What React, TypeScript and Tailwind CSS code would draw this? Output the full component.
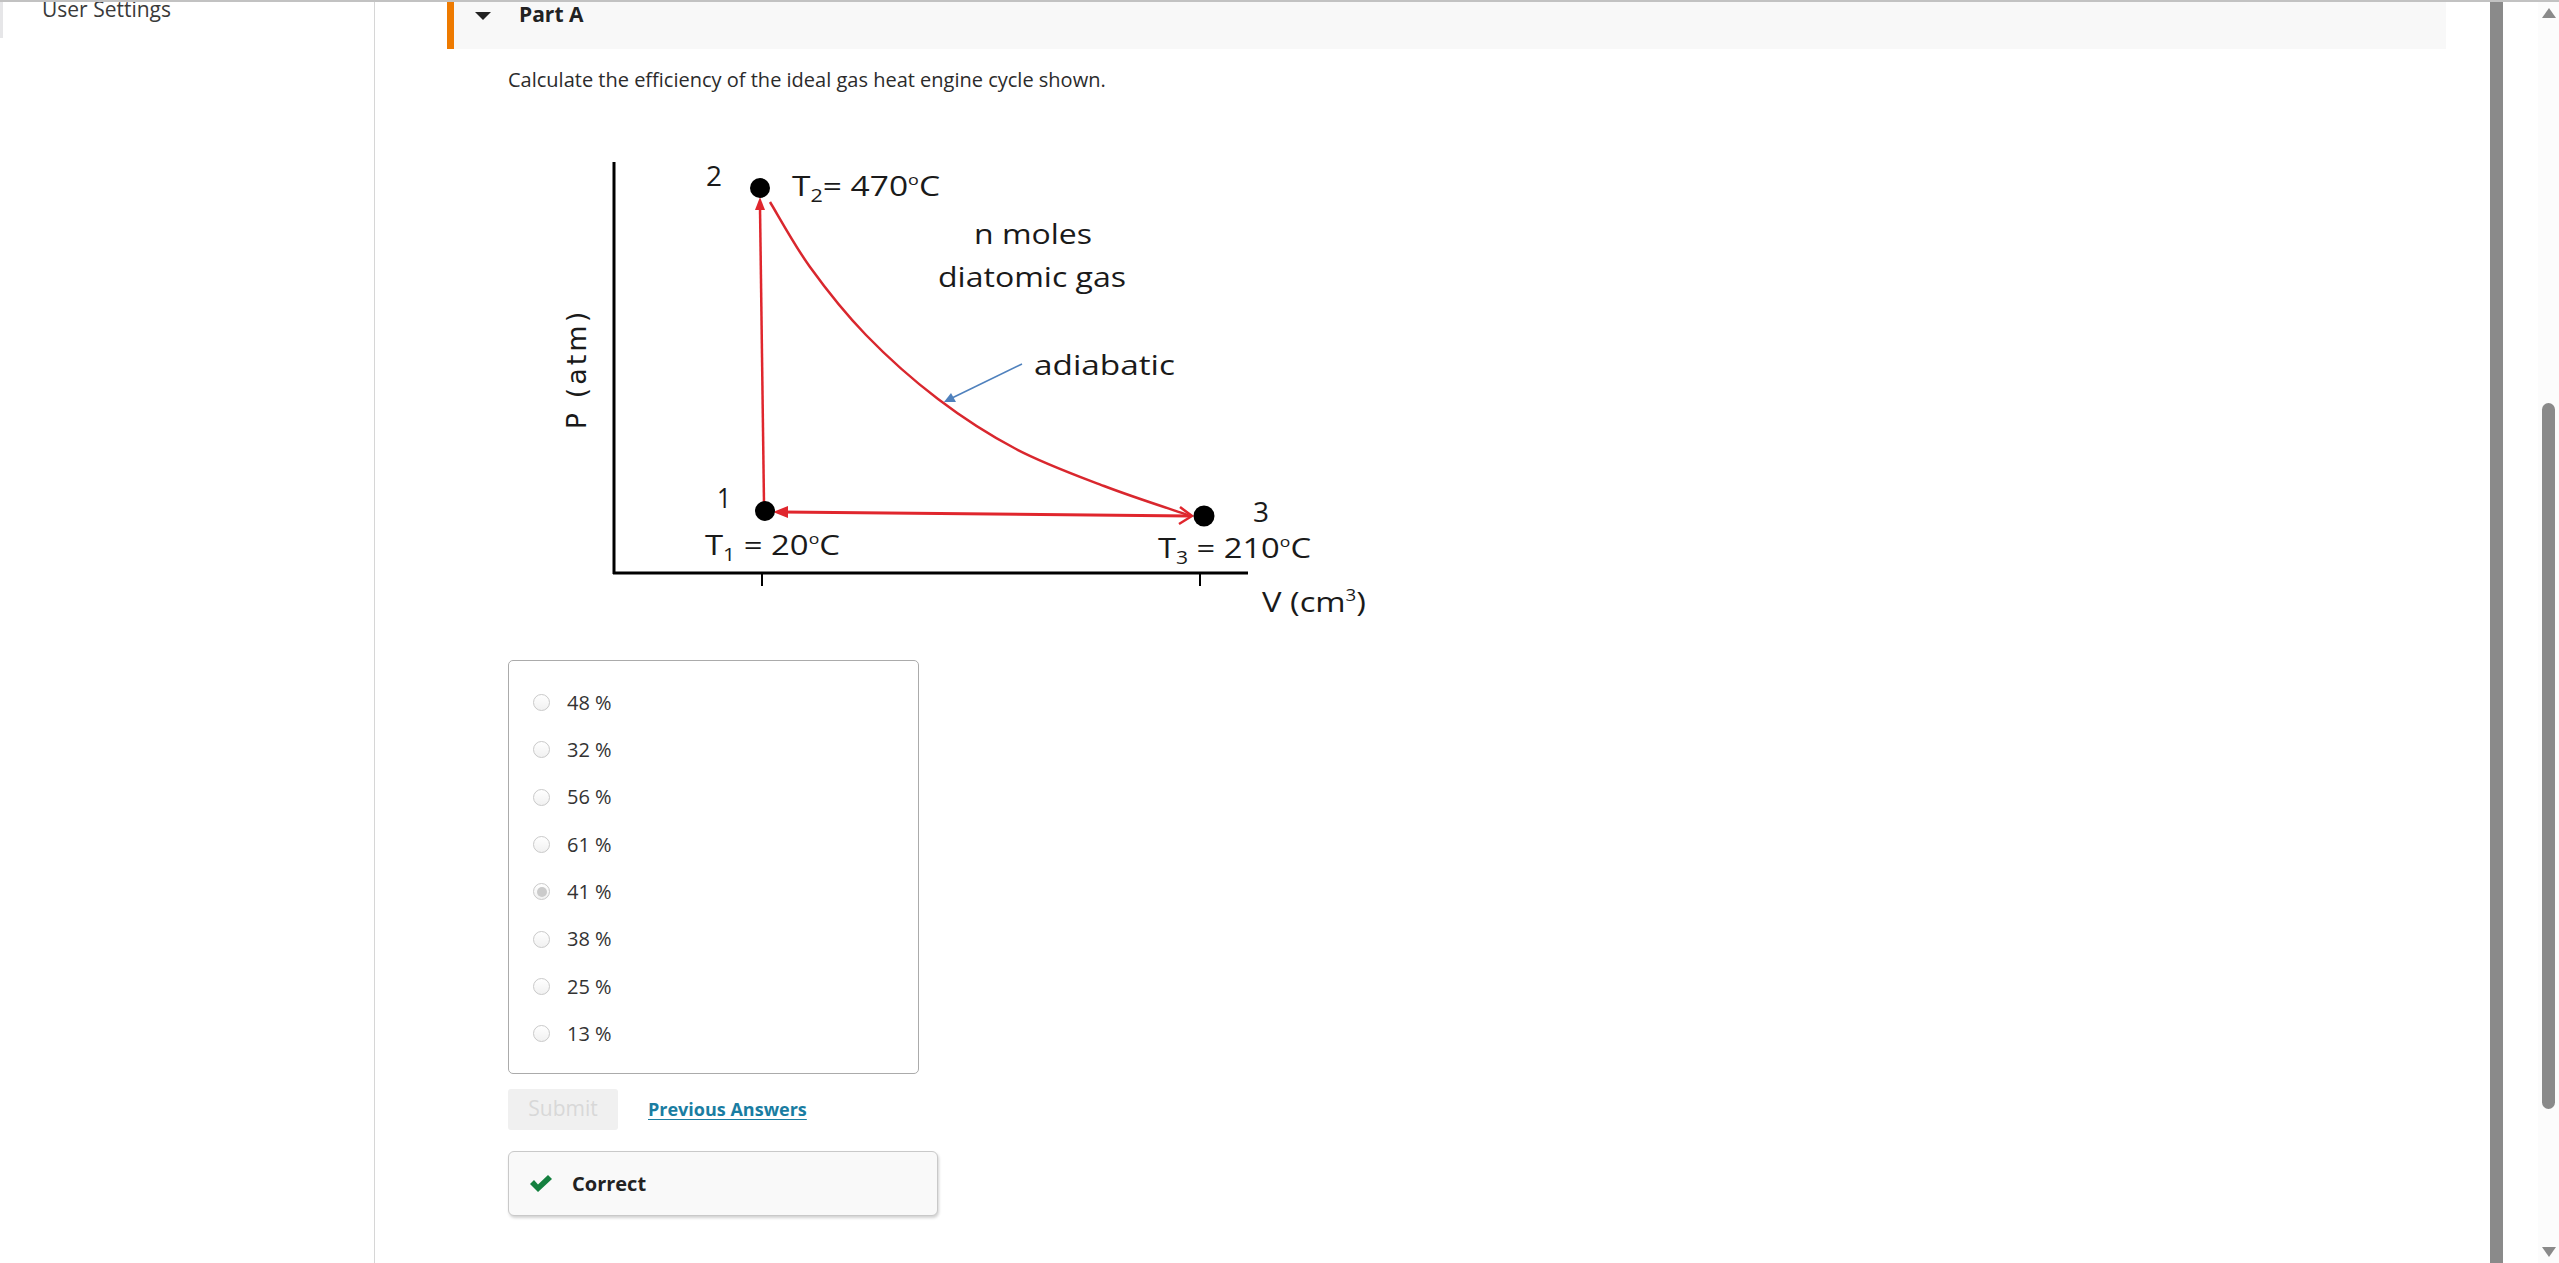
import React from 'react';

const options = ['48 %', '32 %', '56 %', '61 %', '41 %', '38 %', '25 %', '13 %'];

// adiabatic curve from state 2 down to state 3, smoothed catmull-rom
const curvePts: [number, number][] = [
  [230, 53],
  [270, 118],
  [326, 186],
  [398, 250],
  [476, 300],
  [564, 337],
  [648, 366],
];

const smoothPath = (pts: [number, number][]) => {
  let d = `M${pts[0][0]},${pts[0][1]}`;
  for (let i = 0; i < pts.length - 1; i++) {
    const p0 = pts[i - 1] || pts[i];
    const p1 = pts[i];
    const p2 = pts[i + 1];
    const p3 = pts[i + 2] || p2;
    const c1x = p1[0] + (p2[0] - p0[0]) / 6;
    const c1y = p1[1] + (p2[1] - p0[1]) / 6;
    const c2x = p2[0] - (p3[0] - p1[0]) / 6;
    const c2y = p2[1] - (p3[1] - p1[1]) / 6;
    d += ` C${c1x.toFixed(1)},${c1y.toFixed(1)} ${c2x.toFixed(1)},${c2y.toFixed(1)} ${p2[0]},${p2[1]}`;
  }
  return d;
};

const RED = '#e0262d';
const labelFont = "'Open Sans', 'Liberation Sans', sans-serif";

const PVDiagram: React.FC = () => (
  <svg width="840" height="480" viewBox="0 0 840 480" className="block">
    {/* axes */}
    <line x1="74" y1="13" x2="74" y2="425" stroke="#000" strokeWidth="3" />
    <line x1="73" y1="424" x2="708" y2="424" stroke="#000" strokeWidth="3" />
    <line x1="222" y1="424" x2="222" y2="437" stroke="#000" strokeWidth="2" />
    <line x1="660" y1="424" x2="660" y2="437" stroke="#000" strokeWidth="2" />

    {/* 1 -> 2 isochoric */}
    <line x1="224" y1="354" x2="220" y2="58" stroke={RED} strokeWidth="2.5" />
    <polygon points="220,48 215,61 225,61" fill={RED} />

    {/* 2 -> 3 adiabatic */}
    <path d={smoothPath(curvePts)} fill="none" stroke="#d9272e" strokeWidth="2.5" />
    <polyline points="640,358 652,367 639,375" fill="none" stroke={RED} strokeWidth="2.5" />

    {/* 3 -> 1 isobaric */}
    <line x1="650" y1="367" x2="242" y2="363" stroke={RED} strokeWidth="3" />
    <polygon points="233,363 248,357 248,369" fill={RED} />

    {/* blue pointer */}
    <line x1="482" y1="215" x2="412" y2="249" stroke="#4f81bd" strokeWidth="1.6" />
    <polygon points="404,253 411,244 416,253" fill="#4f81bd" />

    {/* state points */}
    <circle cx="220" cy="39" r="10" fill="#000" />
    <circle cx="225" cy="362" r="10" fill="#000" />
    <circle cx="664" cy="367" r="10.5" fill="#000" />

    <g fontFamily={labelFont} fontSize="28" fill="#1a1a1a">
      <text x="166" y="37" textLength="16" lengthAdjust="spacingAndGlyphs">2</text>
      <text x="252" y="47" textLength="148" lengthAdjust="spacingAndGlyphs">
        T<tspan fontSize="18" dy="6">2</tspan>
        <tspan dy="-6">= 470</tspan>
        <tspan fontSize="15" dy="-11">o</tspan>
        <tspan dy="11">C</tspan>
      </text>
      <text x="434" y="95" textLength="118" lengthAdjust="spacingAndGlyphs">n moles</text>
      <text x="398" y="138" textLength="188" lengthAdjust="spacingAndGlyphs">diatomic gas</text>
      <text x="494" y="226" textLength="141" lengthAdjust="spacingAndGlyphs">adiabatic</text>
      <text x="177" y="359" textLength="14" lengthAdjust="spacingAndGlyphs">1</text>
      <text x="165" y="406" textLength="135" lengthAdjust="spacingAndGlyphs">
        T<tspan fontSize="18" dy="6">1</tspan>
        <tspan dy="-6"> = 20</tspan>
        <tspan fontSize="15" dy="-11">o</tspan>
        <tspan dy="11">C</tspan>
      </text>
      <text x="713" y="373" textLength="16" lengthAdjust="spacingAndGlyphs">3</text>
      <text x="618" y="409" textLength="153" lengthAdjust="spacingAndGlyphs">
        T<tspan fontSize="18" dy="6">3</tspan>
        <tspan dy="-6"> = 210</tspan>
        <tspan fontSize="15" dy="-11">o</tspan>
        <tspan dy="11">C</tspan>
      </text>
      <text x="722" y="463" textLength="104" lengthAdjust="spacingAndGlyphs">
        V (cm<tspan fontSize="16" dy="-11">3</tspan>
        <tspan dy="11">)</tspan>
      </text>
    </g>
    <text
      x="220"
      y="46"
      transform="rotate(-90 46 220) translate(-174 174)"
      fontFamily="'DejaVu Sans', sans-serif"
      fontSize="27"
      letterSpacing="3"
      textAnchor="middle"
      fill="#1a1a1a"
    >
      P (atm)
    </text>
  </svg>
);

const Radio: React.FC<{ checked?: boolean }> = ({ checked }) => (
  <span className="flex h-[17px] w-[17px] shrink-0 items-center justify-center rounded-full border border-[#c9c9c9] bg-gradient-to-b from-white to-[#f1f1f1]">
    {checked && <span className="h-[10px] w-[10px] rounded-full bg-[#cbcbcb]" />}
  </span>
);

const App: React.FC = () => {
  return (
    <div className="flex h-[1263px] w-full overflow-hidden border-t-2 border-[#c2c2c2] bg-white font-['Open_Sans','Liberation_Sans',sans-serif] text-[#333]">
      {/* sidebar */}
      <aside className="w-[375px] shrink-0 border-r border-[#d6d6d6]">
        <div className="h-[39px] border-l-[3px] border-[#e6e6e8] pl-[39px]">
          <div className="-mt-[3px] text-[21px] leading-[21px] text-[#3a3a3a]">User Settings</div>
        </div>
      </aside>

      {/* main column */}
      <div className="flex min-w-0 flex-1 flex-col pl-[72px] pr-[44px]">
        <div className="flex h-[47px] items-start border-l-[7px] border-[#ee7a00] bg-[#f8f8f8] pt-[2px]">
          <svg width="16" height="8" viewBox="0 0 16 8" className="ml-[21px] mt-[8px] shrink-0">
            <polygon points="0,0 16,0 8,8" fill="#222" />
          </svg>
          <span className="ml-[28px] text-[21px] font-bold leading-[21px] text-[#222]">Part A</span>
        </div>

        <div className="pl-[61px]">
          <p className="mt-[18px] text-[20px] leading-[26px] text-[#2b2b2b]">
            Calculate the efficiency of the ideal gas heat engine cycle shown.
          </p>

          <div className="ml-[32px] mt-[56px]">
            <PVDiagram />
          </div>

          <div className="mt-[31px] w-[411px] rounded-[5px] border border-[#ababab] pb-[15px] pl-[24px] pt-[18px]">
            {options.map((o) => (
              <label key={o} className="flex h-[47.33px] items-center">
                <Radio checked={o === '41 %'} />
                <span className="ml-[17px] text-[20px] leading-none text-[#333]">{o}</span>
              </label>
            ))}
          </div>

          <div className="mt-[15px] flex items-center">
            <button
              type="button"
              disabled
              className="flex h-[41px] w-[110px] items-center justify-center rounded-[3px] bg-[#f0f0f0] text-[21px] text-[#d8d8d8]"
            >
              Submit
            </button>
            <a className="ml-[30px] text-[18px] font-bold text-[#1a7da2] underline underline-offset-[3px]">
              Previous Answers
            </a>
          </div>

          <div className="mt-[21px] flex h-[65px] w-[430px] items-center rounded-[6px] border border-[#c9c9c9] bg-[#f9f9f9] pl-[21px] shadow-[1px_2px_3px_rgba(0,0,0,0.18)]">
            <svg width="22" height="17" viewBox="0 0 22 17" className="shrink-0">
              <path d="M0,9 L4,5 L8,9.5 L18,0 L22,4 L8,17 Z" fill="#14803f" />
            </svg>
            <span className="ml-[20px] mt-[2px] text-[20px] font-bold text-[#222]">Correct</span>
          </div>
        </div>
      </div>

      {/* inner scroll bar */}
      <div className="w-[13px] shrink-0 bg-[#8a8a8a]" />
      <div className="w-[35px] shrink-0" />

      {/* page scroll bar */}
      <div className="flex w-[21px] shrink-0 flex-col items-center bg-[#fcfcfc]">
        <svg width="14" height="10" viewBox="0 0 14 10" className="mt-[6px] shrink-0">
          <polygon points="7,0 14,10 0,10" fill="#8a8a8a" />
        </svg>
        <div className="mt-[385px] h-[706px] w-[13px] shrink-0 rounded-full bg-[#8a8a8a]" />
        <div className="flex-1" />
        <svg width="14" height="10" viewBox="0 0 14 10" className="mb-[6px] shrink-0">
          <polygon points="0,0 14,0 7,10" fill="#8a8a8a" />
        </svg>
      </div>
    </div>
  );
};

export default App;
